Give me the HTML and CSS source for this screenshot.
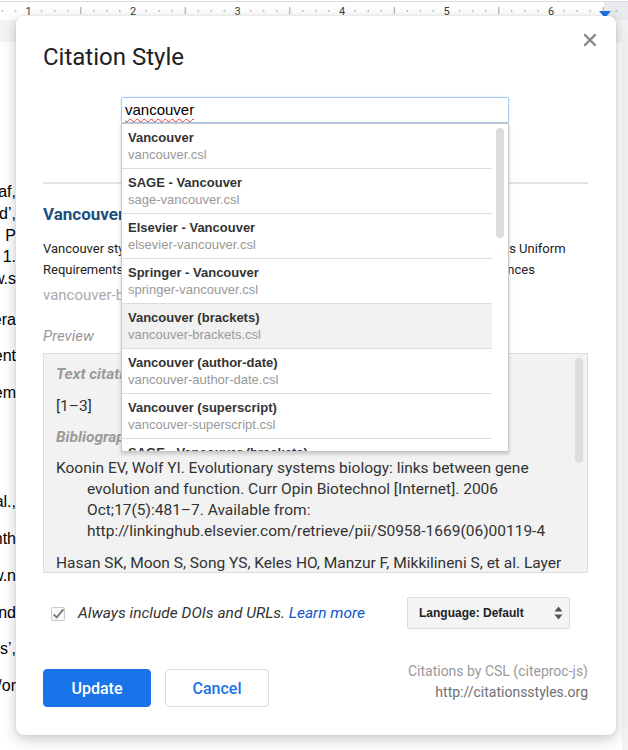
FILE: index.html
```html
<!DOCTYPE html>
<html>
<head>
<meta charset="utf-8">
<title>Citation Style</title>
<link rel="stylesheet" href="styles.css">
</head>
<body>
<div class="ruler">
  <svg width="628" height="20" viewBox="0 0 628 20">
    <defs>
      <pattern id="ticks" x="-76" y="0" width="104.5" height="20" patternUnits="userSpaceOnUse">
        <rect x="12.6" y="10" width="1" height="2" fill="#9aa0a6"/>
        <rect x="25.6" y="10" width="1" height="2" fill="#9aa0a6"/>
        <rect x="38.7" y="10" width="1" height="2" fill="#9aa0a6"/>
        <rect x="51.8" y="7" width="1" height="7" fill="#9aa0a6"/>
        <rect x="64.8" y="10" width="1" height="2" fill="#9aa0a6"/>
        <rect x="77.9" y="10" width="1" height="2" fill="#9aa0a6"/>
        <rect x="90.9" y="10" width="1" height="2" fill="#9aa0a6"/>
      </pattern>
    </defs>
    <rect x="604" y="2" width="24" height="18" fill="#e8eaed"/>
    <rect x="0" y="2" width="628" height="18" fill="url(#ticks)"/>
    <rect x="0" y="1" width="628" height="1" fill="#dadce0"/>
    <g class="ruler-num">
      <text x="28.5" y="15">1</text>
      <text x="133" y="15">2</text>
      <text x="237.5" y="15">3</text>
      <text x="342" y="15">4</text>
      <text x="446.5" y="15">5</text>
      <text x="551" y="15">6</text>
    </g>
    <polygon points="599,11 611,11 605,18" fill="#1a73e8"/>
  </svg>
</div>
<div class="canvas-gap"></div>
<div class="page">
  <div class="frag frag-a">Shaf,<br>Ahmed’,<br>P<br>– 1.<br>www.s</div>
  <div class="frag frag-b">Vera<br>tent<br>item</div>
  <div class="frag frag-c">et al.,<br>month<br>www.n<br>and<br>Users’,<br>and/or</div>
</div>

<div class="dialog">
  <h1 class="title">Citation Style</h1>
  <div class="close" aria-label="Close">
    <svg width="12" height="12" viewBox="0 0 12 12"><path d="M1 1 L11 11 M11 1 L1 11" stroke="#8a8a8a" stroke-width="2.4" stroke-linecap="square"/></svg>
  </div>

  <div class="search-wrap">
    <div class="search"><span class="misspelled">vancouver</span></div>
    <div class="dropdown">
      <div class="items">
        <div class="item"><div class="item-name">Vancouver</div><div class="item-file">vancouver.csl</div></div>
        <div class="item"><div class="item-name">SAGE - Vancouver</div><div class="item-file">sage-vancouver.csl</div></div>
        <div class="item"><div class="item-name">Elsevier - Vancouver</div><div class="item-file">elsevier-vancouver.csl</div></div>
        <div class="item"><div class="item-name">Springer - Vancouver</div><div class="item-file">springer-vancouver.csl</div></div>
        <div class="item item-hover"><div class="item-name">Vancouver (brackets)</div><div class="item-file">vancouver-brackets.csl</div></div>
        <div class="item"><div class="item-name">Vancouver (author-date)</div><div class="item-file">vancouver-author-date.csl</div></div>
        <div class="item"><div class="item-name">Vancouver (superscript)</div><div class="item-file">vancouver-superscript.csl</div></div>
        <div class="item"><div class="item-name">SAGE - Vancouver (brackets)</div><div class="item-file">sage-vancouver-brackets.csl</div></div>
      </div>
      <div class="track"><div class="thumb list-thumb"></div></div>
    </div>
  </div>

  <div class="sep"></div>

  <h2 class="style-name">Vancouver (brackets)</h2>
  <p class="style-desc">Vancouver style as outlined by International Committee of Medical Journal Editors Uniform<br>Requirements for Manuscripts Submitted to Biomedical Journals: Sample References</p>
  <div class="style-file">vancouver-brackets.csl</div>

  <div class="preview-label">Preview</div>
  <div class="preview">
    <div class="preview-content">
      <div class="pv-head">Text citation:</div>
      <div class="pv-cite">[1–3]</div>
      <div class="pv-head pv-bib">Bibliography:</div>
      <div class="pv-entry">Koonin EV, Wolf YI. Evolutionary systems biology: links between gene evolution and function. Curr Opin Biotechnol [Internet]. 2006 Oct;17(5):481–7. Available from: http://linkinghub.elsevier.com/retrieve/pii/S0958-1669(06)00119-4</div>
      <div class="pv-entry">Hasan SK, Moon S, Song YS, Keles HO, Manzur F, Mikkilineni S, et al. Layer by layer assembly of microscale hydrogels for tissue engineering.</div>
    </div>
    <div class="track preview-track"><div class="thumb preview-thumb"></div></div>
  </div>

  <div class="options">
    <div class="check">
      <svg width="14" height="14" viewBox="0 0 14 14">
        <rect x="0.5" y="0.5" width="13" height="13" rx="1" fill="#f8f8f8" stroke="#c9c9c9"/>
        <path d="M2.6 7.4 L5.6 10.4 L12.4 2.4" fill="none" stroke="#777" stroke-width="1.8"/>
      </svg>
    </div>
    <div class="check-label">Always include DOIs and URLs. <a class="learn" href="#">Learn more</a></div>
    <div class="lang">
      <span>Language: Default</span>
      <svg width="9" height="14" viewBox="0 0 9 14"><path d="M0.5 5.5 L4.5 0.5 L8.5 5.5 Z M0.5 8.5 L4.5 13.5 L8.5 8.5 Z" fill="#555"/></svg>
    </div>
  </div>

  <div class="footer">
    <div class="buttons">
      <button class="btn btn-primary">Update</button>
      <button class="btn btn-secondary">Cancel</button>
    </div>
    <div class="credits">
      <div class="credit-1">Citations by CSL (citeproc-js)</div>
      <div class="credit-2">http://citationsstyles.org</div>
    </div>
  </div>
</div>
</body>
</html>
```

FILE: styles.css
```css
html, body {
  margin: 0;
  padding: 0;
}
body {
  width: 628px;
  height: 750px;
  overflow: hidden;
  background: #f1f3f4;
  position: relative;
  font-family: Roboto, "Liberation Sans", Arial, sans-serif;
}
.ruler {
  height: 20px;
  background: #ffffff;
}
.ruler svg {
  display: block;
}
.ruler-num text {
  font-family: Roboto, "Liberation Sans", Arial, sans-serif;
  font-size: 11px;
  fill: #3c4043;
  text-anchor: middle;
}
.canvas-gap {
  height: 22px;
  background: #f1f3f4;
}
.page {
  width: 622px;
  height: 708px;
  background: #ffffff;
  overflow: hidden;
  font-family: "Liberation Sans", Arial, sans-serif;
  font-size: 16px;
  color: #000;
}
.frag {
  width: 216px;
  margin-left: -200px;
  text-align: right;
  white-space: nowrap;
}
.frag-a {
  padding-top: 139px;
  line-height: 21.75px;
}
.frag-b {
  margin-top: 12px;
  line-height: 36.5px;
}
.frag-c {
  margin-top: 73px;
  line-height: 36.8px;
}

/* dialog */
.dialog {
  position: absolute;
  left: 16px;
  top: 16px;
  width: 600px;
  height: 719px;
  box-sizing: border-box;
  padding: 26px 28px 28px 27px;
  background: #fff;
  border-radius: 8px;
  box-shadow: 0 4px 14px rgba(0, 0, 0, 0.22), 0 0 3px rgba(0, 0, 0, 0.08);
  display: flex;
  flex-direction: column;
  color: #333;
}
.title {
  margin: 0;
  font-family: Roboto, "Open Sans", sans-serif;
  font-weight: 400;
  font-size: 24px;
  line-height: 30px;
  color: #202124;
  letter-spacing: 0;
}
.close {
  position: absolute;
  top: 18px;
  right: 20px;
  width: 12px;
  height: 12px;
}
.close svg {
  display: block;
}

.search-wrap {
  position: relative;
  margin-top: 25px;
  margin-left: 78px;
  width: 388px;
  height: 26px;
}
.search {
  box-sizing: border-box;
  height: 26px;
  border: 1px solid #a9c8f5;
  border-radius: 2px;
  box-shadow: 0 0 2px rgba(77, 144, 254, 0.35);
  padding: 0 3px;
  font-family: "Liberation Sans", Arial, sans-serif;
  font-size: 15px;
  line-height: 24px;
  color: #000;
}
.misspelled {
  text-decoration-line: underline;
  text-decoration-style: wavy;
  text-decoration-color: #e53935;
  text-decoration-thickness: 1px;
  text-underline-offset: 3px;
}
.dropdown {
  position: absolute;
  top: 26px;
  left: 0;
  width: 388px;
  height: 329px;
  box-sizing: border-box;
  border: 1px solid #c6c6c6;
  background: #fff;
  box-shadow: 0 2px 4px rgba(0, 0, 0, 0.18);
  display: flex;
  overflow: hidden;
  z-index: 2;
}
.items {
  width: 370px;
  flex: none;
}
.item {
  height: 45px;
  padding: 5px 0 0 6px;
  box-sizing: border-box;
  border-bottom: 1px solid #dcdcdc;
  font-family: "Liberation Sans", Arial, sans-serif;
  font-size: 13px;
}
.item-hover {
  background: #f1f1f1;
}
.item-name {
  font-weight: 700;
  color: #333;
  line-height: 17px;
}
.item-file {
  color: #999;
  line-height: 18px;
}
.track {
  flex: none;
}
.thumb {
  width: 8px;
  border-radius: 4px;
  background: #dadce0;
}
.list-thumb {
  margin: 4px 0 0 4px;
  height: 110px;
}

.sep {
  margin-top: 59px;
  height: 2px;
  background: #e2e2e2;
}
.style-name {
  margin: 19px 0 0;
  font-size: 17px;
  line-height: 22px;
  font-weight: 700;
  color: #1d4f7d;
}
.style-desc {
  margin: 13px 0 0;
  font-size: 13px;
  line-height: 21px;
  color: #222;
  white-space: nowrap;
}
.style-file {
  margin-top: 5px;
  font-size: 15px;
  line-height: 20px;
  color: #aaa;
}
.preview-label {
  margin-top: 21px;
  font-size: 15px;
  line-height: 20px;
  font-style: italic;
  color: #999;
}
.preview {
  margin-top: 7px;
  height: 220px;
  box-sizing: border-box;
  border: 1px solid #dcdcdc;
  background: #f2f2f2;
  display: flex;
  overflow: hidden;
}
.preview-content {
  flex: 1;
  padding: 10px 8px 0 12px;
  font-size: 15.5px;
  color: #333;
}
.pv-head {
  font-weight: 700;
  font-style: italic;
  color: #9a9a9a;
  line-height: 20px;
}
.pv-cite {
  margin-top: 12px;
  line-height: 20px;
}
.pv-bib {
  margin-top: 11px;
}
.pv-entry {
  margin-top: 11px;
  line-height: 21px;
  padding-left: 31px;
  text-indent: -31px;
}
.preview-track {
  margin-right: 4px;
}
.preview-thumb {
  margin-top: 4px;
  height: 105px;
}

.options {
  margin-top: 24px;
  height: 32px;
  display: flex;
  align-items: center;
}
.check {
  margin-left: 8px;
  width: 14px;
  height: 14px;
  margin-top: 2px;
}
.check svg {
  display: block;
}
.check-label {
  margin-left: 13px;
  font-size: 15.5px;
  font-style: italic;
  color: #333;
}
.learn {
  color: #1155cc;
  text-decoration: none;
}
.lang {
  margin-left: auto;
  margin-right: 18px;
  width: 163px;
  height: 32px;
  box-sizing: border-box;
  border: 1px solid #dcdcdc;
  border-radius: 2px;
  background: #f4f4f4;
  display: flex;
  align-items: center;
  justify-content: space-between;
  padding: 0 6px 0 11px;
  font-family: "Liberation Sans", Arial, sans-serif;
  font-size: 12px;
  font-weight: 700;
  color: #222;
}
.lang svg {
  display: block;
}

.footer {
  margin-top: 40px;
  display: flex;
  justify-content: space-between;
  align-items: flex-start;
}
.buttons {
  display: flex;
  gap: 14px;
}
.btn {
  height: 38px;
  box-sizing: border-box;
  border-radius: 4px;
  font-family: Roboto, sans-serif;
  font-size: 16px;
  font-weight: 500;
  padding: 0;
  cursor: pointer;
}
.btn-primary {
  width: 108px;
  background: #1a73e8;
  border: 1px solid #1a73e8;
  color: #fff;
}
.btn-secondary {
  width: 104px;
  background: #fff;
  border: 1px solid #dadce0;
  color: #1a73e8;
}
.credits {
  margin-top: -8px;
  text-align: right;
  font-size: 14px;
  line-height: 21px;
}
.credit-1 {
  color: #9a9a9a;
}
.credit-2 {
  color: #707070;
}
```
